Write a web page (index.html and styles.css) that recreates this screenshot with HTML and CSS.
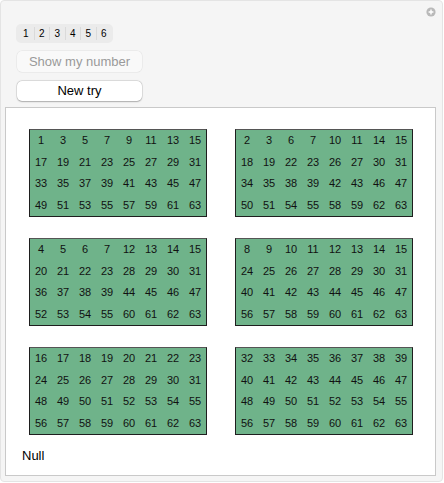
FILE: index.html
```html
<!DOCTYPE html>
<html>
<head>
<meta charset="utf-8">
<link rel="stylesheet" href="styles.css">
</head>
<body>
<div class="panel">
  <svg class="plus" width="10" height="10" viewBox="0 0 10 10"><circle cx="5" cy="5" r="4.6" fill="#b9b9b9"/><path d="M5 2.6v4.8M2.6 5h4.8" stroke="#fff" stroke-width="1.4"/></svg>
  <div class="tabs">
    <span class="tab">1</span><span class="tab">2</span><span class="tab">3</span><span class="tab">4</span><span class="tab">5</span><span class="tab">6</span>
  </div>
  <div class="btn disabled">Show my number</div>
  <div class="btn primary">New try</div>
  <div class="output">
    <div class="cards" id="cards"></div>
    <div class="null">Null</div>
  </div>
</div>
<script>
  var host = document.getElementById('cards');
  for (var b = 0; b < 6; b++) {
    var card = document.createElement('div');
    card.className = 'card';
    var nums = [];
    for (var n = 1; n < 64; n++) if (n & (1 << b)) nums.push(n);
    nums.forEach(function (v) {
      var c = document.createElement('span');
      c.className = 'cell';
      c.textContent = v;
      card.appendChild(c);
    });
    host.appendChild(card);
  }
</script>
</body>
</html>
```

FILE: styles.css
```css
html, body { margin: 0; padding: 0; background: #ffffff; }
body { font-family: "Liberation Sans", Arial, sans-serif; color: #000; }

.panel {
  position: relative;
  box-sizing: border-box;
  width: 443px;
  height: 482px;
  background: #f5f5f5;
  border: 1px solid #e4e4e4;
  border-radius: 4px;
  padding: 22px 0 0 15px;
}

.plus { position: absolute; right: 6px; top: 6px; }

.tabs {
  display: inline-flex;
  height: 19px;
  background: #ebebeb;
  border-radius: 5px;
  padding: 0 2px;
  box-sizing: border-box;
  align-items: center;
}
.tab {
  font-size: 10px;
  width: 15.5px;
  text-align: center;
  line-height: 13px;
  border-left: 1px solid #dadada;
  box-sizing: border-box;
}
.tab:first-child { border-left: none; }

.btn {
  box-sizing: border-box;
  width: 125px;
  height: 21px;
  margin-left: 1px;
  border-radius: 5px;
  font-size: 13px;
  line-height: 21px;
  text-align: center;
}
.disabled {
  margin-top: 8px;
  background: #f9f9f9;
  color: #9a9a9a;
  box-shadow: 0 0 0 0.5px #e2e2e2;
}
.primary {
  margin-top: 9px;
  height: 20px;
  line-height: 20px;
  background: #fff;
  color: #000;
  box-shadow: 0 0.5px 1.5px rgba(0,0,0,0.25), 0 0 0 0.5px #d6d6d6;
}

.output {
  box-sizing: border-box;
  width: 431px;
  height: 369px;
  margin: 6px 0 0 -11px;
  background: #fff;
  border: 1px solid #c9c9c9;
  padding: 21px 0 0 23px;
}

.cards {
  display: grid;
  grid-template-columns: 178px 178px;
  column-gap: 28px;
  row-gap: 21px;
}

.card {
  box-sizing: border-box;
  width: 178px;
  height: 88px;
  background: #6fb38a;
  border: 1px solid #1e1e1e;
  border-top-color: #555;
  display: grid;
  grid-template-columns: repeat(8, 22px);
  grid-template-rows: repeat(4, 21.5px);
}
.cell {
  font-size: 11px;
  line-height: 21.5px;
  text-align: center;
  color: #111;
}

.null {
  font-size: 13px;
  margin: 13px 0 0 -7px;
  line-height: 15px;
}
```
